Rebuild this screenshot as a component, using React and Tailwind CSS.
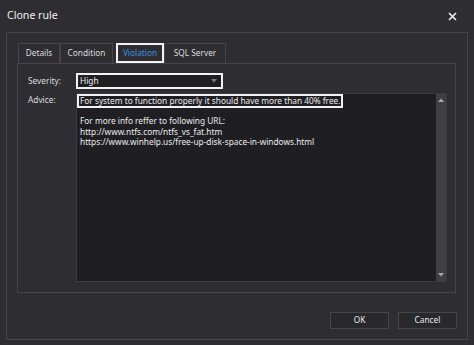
import { useState } from "react";

const tabs = [
  { name: "Details", w: "w-[42px]" },
  { name: "Condition", w: "w-[53px]" },
  { name: "Violation", w: "w-[48px]" },
  { name: "SQL Server", w: "w-[62px]" },
];

export default function App() {
  const [active] = useState("Violation");

  return (
    <div
      className="w-[474px] h-[345px] bg-[#2d2d32] text-[#e6e6e6] flex flex-col overflow-hidden"
      style={{ fontFamily: '"Noto Sans", "Open Sans", sans-serif' }}
    >
      {/* title bar */}
      <div className="h-[32px] flex items-center justify-between pl-[7px] pr-[17px]">
        <span className="text-[10.6px] text-[#f0f0f0]">Clone rule</span>
        <svg width="9" height="9" viewBox="0 0 9 9" className="text-[#f0f0f0]">
          <path d="M1 1 L8 8 M8 1 L1 8" stroke="currentColor" strokeWidth="1.6" />
        </svg>
      </div>

      {/* window frame */}
      <div className="mx-[6px] h-[308px] border border-[#45454b] flex flex-col pt-[10px] pl-[10px] pr-[11px]">
        {/* tab strip */}
        <div className="flex h-[20px] items-end pl-[1px]">
          {tabs.map((t) => {
            const sel = t.name === active;
            return (
              <div
                key={t.name}
                className={
                  sel
                    ? `${t.w} h-[20px] ml-[3px] border-2 border-[#f2f2f2] flex items-center justify-center text-[8.3px] text-[#3d8fe0]`
                    : `${t.w} h-[20px] border-t border-l border-r border-[#45454b] flex items-center justify-center text-[8.3px] text-[#dcdcdc]`
                }
              >
                {t.name}
              </div>
            );
          })}
        </div>

        {/* tab page */}
        <div className="h-[230px] border border-[#45454b] flex flex-col pt-[9px] pl-[10px] pr-[8px] pb-[10px] gap-[4px]">
          <div className="flex items-center h-[16px]">
            <span className="w-[48px] text-[8.3px] text-[#dcdcdc]">Severity:</span>
            <div className="w-[147px] h-[16px] border-2 border-[#f2f2f2] bg-[#1f1f23] flex items-center justify-between pl-[2px] pr-[4px]">
              <span className="text-[8.3px] text-[#ececec] leading-none">High</span>
              <svg width="6" height="4" viewBox="0 0 6 4">
                <path d="M0 0 L6 0 L3 3.5 Z" fill="#7a7a80" />
              </svg>
            </div>
          </div>

          <div className="flex flex-1 min-h-0">
            <span className="w-[48px] text-[8.3px] text-[#dcdcdc] leading-[13px]">Advice:</span>
            <div className="flex-1 flex bg-[#1f1f23] border border-[#3a3a40]">
              <div className="flex-1 text-[8.3px] leading-[10.7px] text-[#ececec]">
                <div className="inline-flex items-center border-2 border-[#f2f2f2] px-[1px] h-[14px]">
                  For system to function properly it should have more than 40% free.
                </div>
                <div className="pl-[3px] pt-[8px]">
                  <div>For more info reffer to following URL:</div>
                  <div>http://www.ntfs.com/ntfs_vs_fat.htm</div>
                  <div>https://www.winhelp.us/free-up-disk-space-in-windows.html</div>
                </div>
              </div>
              <div className="w-[10px] bg-[#3f3f44] flex flex-col justify-between items-center py-[4px]">
                <svg width="6" height="4" viewBox="0 0 6 4">
                  <path d="M0 4 L6 4 L3 0.5 Z" fill="#a8a8ae" />
                </svg>
                <svg width="6" height="4" viewBox="0 0 6 4">
                  <path d="M0 0 L6 0 L3 3.5 Z" fill="#a8a8ae" />
                </svg>
              </div>
            </div>
          </div>
        </div>

        {/* buttons */}
        <div className="flex justify-end gap-[9px] mt-[19px] -mr-[1px]">
          <button className="w-[59px] h-[17px] border border-[#45454b] bg-[#29292d] text-[8.3px] text-[#e6e6e6] leading-none">
            OK
          </button>
          <button className="w-[59px] h-[17px] border border-[#45454b] bg-[#29292d] text-[8.3px] text-[#e6e6e6] leading-none">
            Cancel
          </button>
        </div>
      </div>
    </div>
  );
}
